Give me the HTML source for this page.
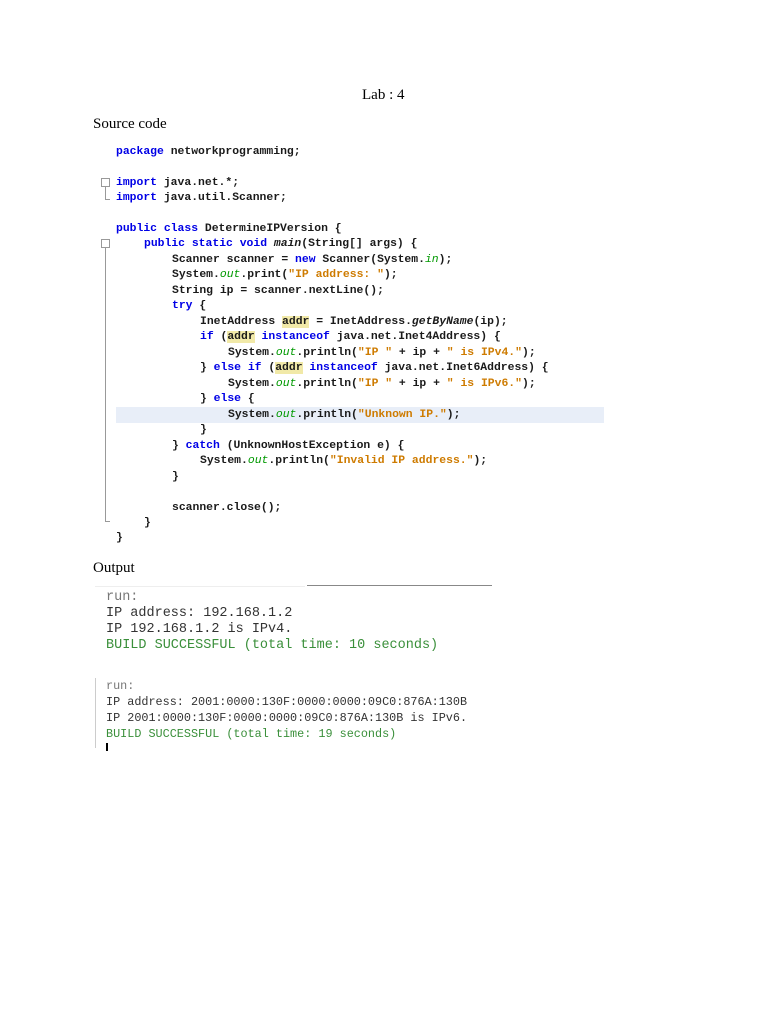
<!DOCTYPE html>
<html><head><meta charset="utf-8"><style>
body{margin:0;width:768px;height:1024px;background:#fff;position:relative;overflow:hidden;font-family:"Liberation Serif",serif;}
.t{position:absolute;font-size:15px;color:#000;white-space:pre;}
.c{position:absolute;font-family:"Liberation Mono",monospace;font-size:11.4px;font-weight:bold;color:#1a1a1a;white-space:pre;line-height:14px;}
.k{color:#0000e6}.s{color:#ce7b00}.g{color:#009900;font-style:italic;font-weight:normal}.i{font-style:italic}
.h{background:#f1e9a8}
.o{position:absolute;font-family:"Liberation Mono",monospace;white-space:pre;color:#333;}
.gr{color:#3a8f3a}
</style></head><body>
<div class="t" style="left:362px;top:87px">Lab : 4</div>
<div class="t" style="left:93px;top:116px">Source code</div>
<div class="t" style="left:93px;top:560px">Output</div>

<div style="position:absolute;left:116px;top:407px;width:488px;height:16px;background:#e8eef8"></div>
<div style="position:absolute;left:101px;top:178px;width:7px;height:7px;border:1px solid #999"></div>
<div style="position:absolute;left:105px;top:187px;width:1px;height:12px;background:#999"></div>
<div style="position:absolute;left:105px;top:199px;width:5px;height:1px;background:#999"></div>
<div style="position:absolute;left:101px;top:239px;width:7px;height:7px;border:1px solid #999"></div>
<div style="position:absolute;left:105px;top:248px;width:1px;height:273px;background:#999"></div>
<div style="position:absolute;left:105px;top:521px;width:5px;height:1px;background:#999"></div>

<div class="c" style="left:116px;top:145px"><span class="k">package</span> networkprogramming;</div>
<div class="c" style="left:116px;top:176px"><span class="k">import</span> java.net.*;</div>
<div class="c" style="left:116px;top:191px"><span class="k">import</span> java.util.Scanner;</div>
<div class="c" style="left:116px;top:222px"><span class="k">public class</span> DetermineIPVersion {</div>
<div class="c" style="left:144px;top:237px"><span class="k">public static void</span> <span class="i">main</span>(String[] args) {</div>
<div class="c" style="left:172px;top:253px">Scanner scanner = <span class="k">new</span> Scanner(System.<span class="g">in</span>);</div>
<div class="c" style="left:172px;top:268px">System.<span class="g">out</span>.print(<span class="s">"IP address: "</span>);</div>
<div class="c" style="left:172px;top:284px">String ip = scanner.nextLine();</div>
<div class="c" style="left:172px;top:299px"><span class="k">try</span> {</div>
<div class="c" style="left:200px;top:315px">InetAddress <span class="h">addr</span> = InetAddress.<span class="i">getByName</span>(ip);</div>
<div class="c" style="left:200px;top:330px"><span class="k">if</span> (<span class="h">addr</span> <span class="k">instanceof</span> java.net.Inet4Address) {</div>
<div class="c" style="left:228px;top:346px">System.<span class="g">out</span>.println(<span class="s">"IP "</span> + ip + <span class="s">" is IPv4."</span>);</div>
<div class="c" style="left:200px;top:361px">} <span class="k">else if</span> (<span class="h">addr</span> <span class="k">instanceof</span> java.net.Inet6Address) {</div>
<div class="c" style="left:228px;top:377px">System.<span class="g">out</span>.println(<span class="s">"IP "</span> + ip + <span class="s">" is IPv6."</span>);</div>
<div class="c" style="left:200px;top:392px">} <span class="k">else</span> {</div>
<div class="c" style="left:228px;top:408px">System.<span class="g">out</span>.println(<span class="s">"Unknown IP."</span>);</div>
<div class="c" style="left:200px;top:423px">}</div>
<div class="c" style="left:172px;top:439px">} <span class="k">catch</span> (UnknownHostException e) {</div>
<div class="c" style="left:200px;top:454px">System.<span class="g">out</span>.println(<span class="s">"Invalid IP address."</span>);</div>
<div class="c" style="left:172px;top:470px">}</div>
<div class="c" style="left:172px;top:501px">scanner.close();</div>
<div class="c" style="left:144px;top:516px">}</div>
<div class="c" style="left:116px;top:531px">}</div>

<div style="position:absolute;left:307px;top:585px;width:185px;height:1px;background:#888"></div>
<div style="position:absolute;left:95px;top:586px;width:210px;height:1px;background:#eee"></div>
<div class="o" style="left:106px;top:590px;font-size:13.5px;color:#777">run:</div>
<div class="o" style="left:106px;top:606px;font-size:13.5px">IP address: 192.168.1.2</div>
<div class="o" style="left:106px;top:622px;font-size:13.5px">IP 192.168.1.2 is IPv4.</div>
<div class="o gr" style="left:106px;top:638px;font-size:13.5px">BUILD SUCCESSFUL (total time: 10 seconds)</div>

<div style="position:absolute;left:95px;top:678px;width:1px;height:70px;background:#ccc"></div>
<div class="o" style="left:106px;top:679px;font-size:11.8px;color:#777">run:</div>
<div class="o" style="left:106px;top:695px;font-size:11.8px">IP address: 2001:0000:130F:0000:0000:09C0:876A:130B</div>
<div class="o" style="left:106px;top:711px;font-size:11.8px">IP 2001:0000:130F:0000:0000:09C0:876A:130B is IPv6.</div>
<div class="o gr" style="left:106px;top:727px;font-size:11.8px">BUILD SUCCESSFUL (total time: 19 seconds)</div>
<div style="position:absolute;left:106px;top:743px;width:2px;height:8px;background:#000"></div>
</body></html>
